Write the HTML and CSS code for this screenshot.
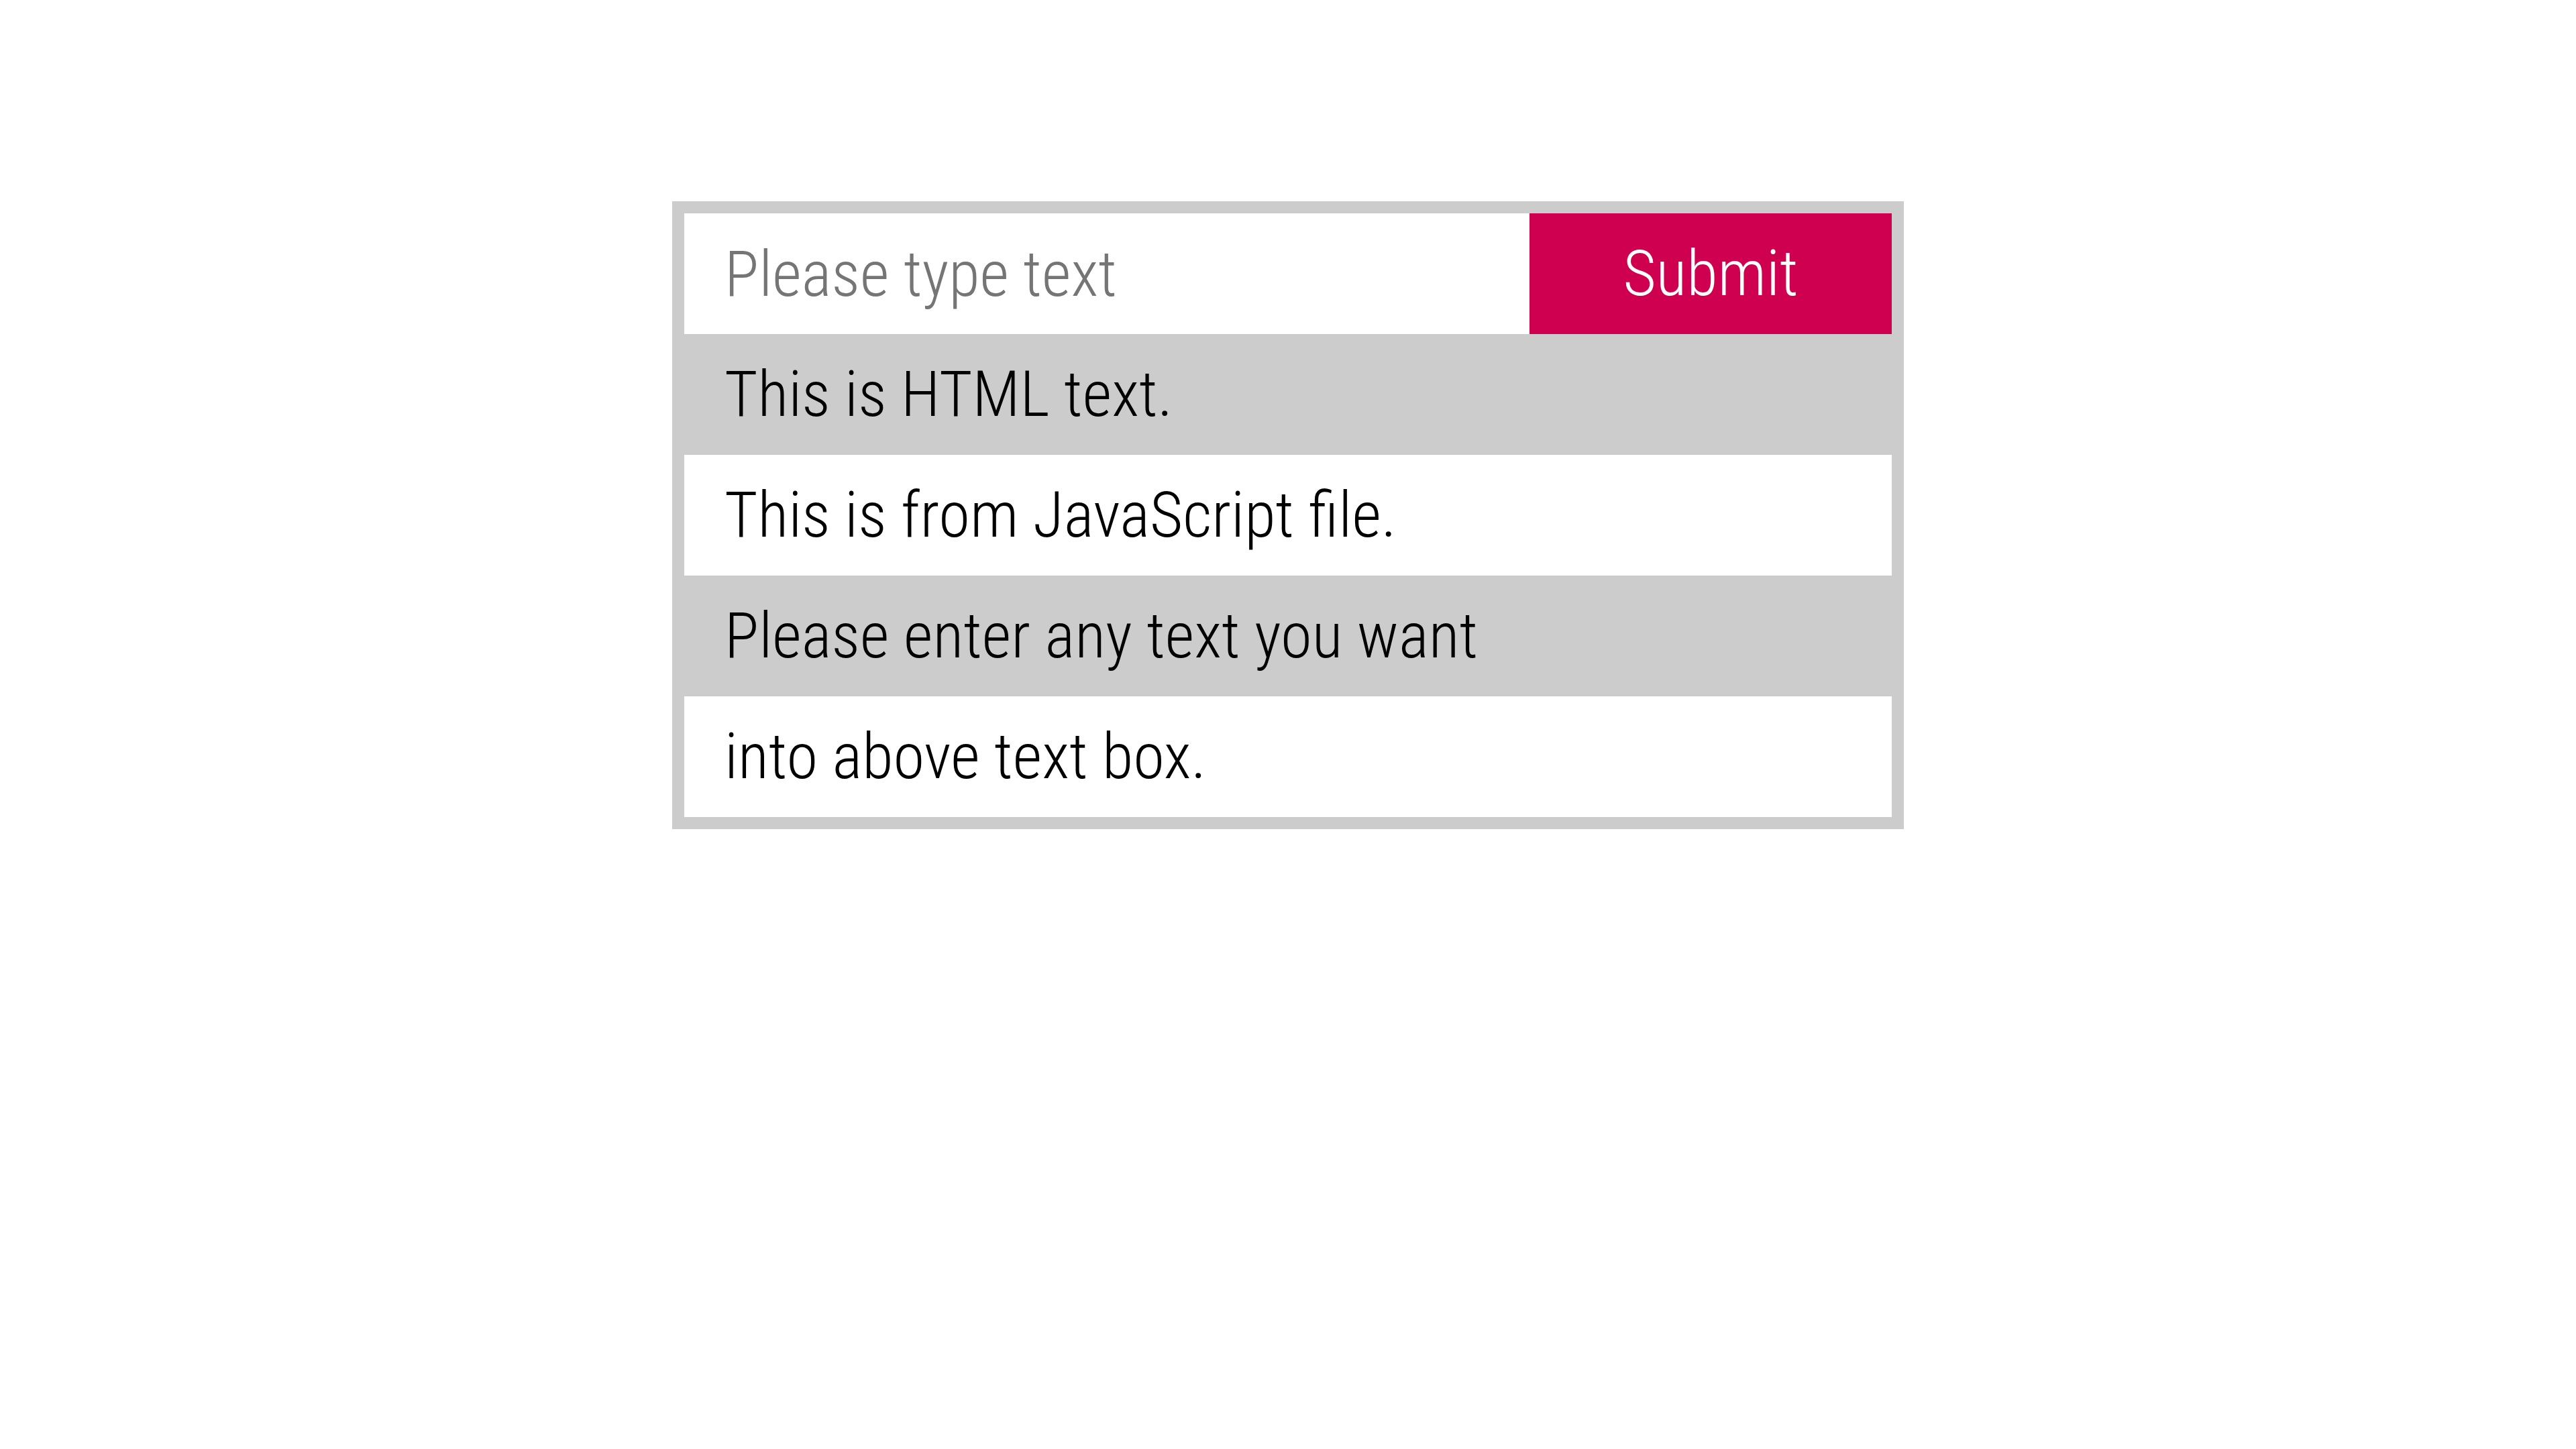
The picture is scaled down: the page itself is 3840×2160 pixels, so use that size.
FILE: index.html
```html
<!DOCTYPE html>
<html>
<head><meta charset="utf-8"><title>Text list</title><link rel="stylesheet" href="styles.css"></head>
<body>
<main class="page">
  <section class="panel">
    <form class="entry" onsubmit="return false;">
      <input class="entry-input" type="text" placeholder="Please type text">
      <button class="entry-button" type="submit">Submit</button>
    </form>
    <ul class="list">
      <li class="item">This is HTML text.</li>
      <li class="item">This is from JavaScript file.</li>
      <li class="item">Please enter any text you want</li>
      <li class="item">into above text box.</li>
    </ul>
  </section>
</main>
</body>
</html>
```
FILE: styles.css
```css
html, body { margin: 0; padding: 0; background: #ffffff; }
body { font-family: "Roboto", "Liberation Sans", sans-serif; font-weight: 300; font-stretch: 75%; }
.page { display: flex; justify-content: center; padding-top: 300px; }
.panel { width: 1800px; border: 18px solid #cccccc; background: #ffffff; }
.entry { display: flex; height: 180px; margin: 0; }
.entry-input {
  flex: 1 1 auto; min-width: 0; height: 180px; box-sizing: border-box;
  border: 0; outline: none; margin: 0; padding: 0 0 0 60px;
  font-family: "Roboto", "Liberation Sans", sans-serif; font-weight: 300; font-stretch: 75%; font-size: 95px;
  color: #000; background: #ffffff;
}
.entry-input::placeholder { color: #757575; opacity: 1; }
.entry-button {
  width: 540px; height: 180px; flex: 0 0 540px; border: 0; margin: 0; padding: 0;
  background: #cf004f; color: #ffffff;
  font-family: "Roboto", "Liberation Sans", sans-serif; font-weight: 300; font-stretch: 75%; font-size: 95px;
  line-height: 180px;
}
.list { list-style: none; margin: 0; padding: 0; }
.item {
  height: 180px; line-height: 180px; padding-left: 60px;
  font-size: 95px; color: #000000; white-space: nowrap;
}
.item:nth-child(odd) { background: #cccccc; }
.item:nth-child(even) { background: #ffffff; }
```
